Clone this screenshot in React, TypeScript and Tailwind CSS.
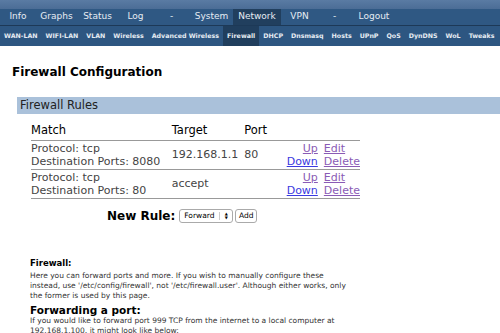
const mainMenu = [
  { label: "Info", w: "w-[36px]" },
  { label: "Graphs", w: "w-[41px]" },
  { label: "Status", w: "w-[41px]" },
  { label: "Log", w: "w-[35px]" },
  { label: "-", w: "w-[37px]" },
  { label: "System", w: "w-[43px]" },
  { label: "Network", w: "w-[48px]", active: true },
  { label: "VPN", w: "w-[37px]" },
  { label: "-", w: "w-[33px]" },
  { label: "Logout", w: "w-[46px]" },
];

const subMenu = [
  "WAN-LAN",
  "WIFI-LAN",
  "VLAN",
  "Wireless",
  "Advanced Wireless",
  "Firewall",
  "DHCP",
  "Dnsmasq",
  "Hosts",
  "UPnP",
  "QoS",
  "DynDNS",
  "WoL",
  "Tweaks",
];

const rules = [
  { port: "8080", target: "192.168.1.1", targetPort: "80" },
  { port: "80", target: "accept", targetPort: "" },
];

export default function App() {
  return (
    <div className="w-[500px] h-[333px] overflow-hidden bg-white font-['DejaVu_Sans',sans-serif] text-[#333]">
      {/* header */}
      <div className="h-[9px] bg-gradient-to-b from-[#5a7ba3] to-[#4b6d96]" />
      <div className="flex h-[16px] bg-[#2f5883] text-[9px] text-[#e6ecf3]">
        {mainMenu.map((m, i) => (
          <div
            key={i}
            className={`${m.w} flex items-center justify-center ${
              m.active ? "bg-[#213f5e]" : ""
            }`}
          >
            {m.label}
          </div>
        ))}
      </div>
      <div className="h-[1px] bg-[#1d3957]" />
      <div className="flex h-[20px] whitespace-nowrap bg-[#2d5681] text-[6.3px] font-bold text-[#e6ecf3]">
        {subMenu.map((s) => (
          <div
            key={s}
            className={`flex items-center px-[4px] ${
              s === "Firewall" ? "bg-[#203e5d]" : ""
            }`}
          >
            {s}
          </div>
        ))}
      </div>

      {/* content */}
      <h2 className="mt-[19px] ml-[12px] text-[12px] font-bold leading-[15px] text-black">
        Firewall Configuration
      </h2>

      <div className="mt-[17px] ml-[17px] flex h-[17px] items-center bg-[#aac1da] pl-[3px] text-[11.5px] text-[#222]">
        Firewall Rules
      </div>

      <table className="mt-[10px] ml-[31px] w-[329px] border-collapse text-[11px]">
        <thead>
          <tr className="border-b border-[#999] text-[11.5px] text-black">
            <th className="w-[147px] pb-[3px] text-left font-normal leading-[13px]">Match</th>
            <th className="w-[73px] pb-[3px] text-left font-normal leading-[13px]">Target</th>
            <th className="w-[44px] pb-[3px] text-left font-normal leading-[13px]">Port</th>
            <th className="pb-[3px]" />
            <th className="pb-[3px]" />
          </tr>
        </thead>
        <tbody>
          {rules.map((r, i) => (
            <tr key={i} className="border-b border-[#999]">
              <td className="py-[1px] align-middle text-[#444]">
                <div className="leading-[13px]">Protocol: tcp</div>
                <div className="leading-[13px]">Destination Ports: {r.port}</div>
              </td>
              <td className="align-middle text-[#444]">{r.target}</td>
              <td className="align-middle text-[#444]">{r.targetPort}</td>
              <td className="text-right align-middle">
                <div className="leading-[13px] text-[#8a5bb5] underline">Up</div>
                <div className="leading-[13px] text-[#3a3ae0] underline">Down</div>
              </td>
              <td className="pl-[6px] align-middle text-[#8a5bb5]">
                <div className="leading-[13px] underline">Edit</div>
                <div className="leading-[13px] underline">Delete</div>
              </td>
            </tr>
          ))}
        </tbody>
      </table>

      <div className="mt-[8px] ml-[107px] flex items-center gap-[4px]">
        <span className="text-[12px] font-bold text-black">New Rule:</span>
        <div className="flex items-center gap-[2px]">
          <div className="flex h-[14px] w-[54px] items-center rounded-[3px] border border-[#aaa] bg-white text-[7.5px] text-black">
            <span className="flex-1 pl-[4px]">Forward</span>
            <span className="flex w-[13px] flex-col items-center border-l border-[#ccc] text-[4px] leading-[4px]">
              <span>▲</span>
              <span>▼</span>
            </span>
          </div>
          <div className="flex h-[14px] w-[22px] items-center justify-center rounded-[3px] border border-[#aaa] bg-white text-[7.5px] text-black">
            Add
          </div>
        </div>
      </div>

      <div className="mt-[33px] ml-[30px] whitespace-nowrap text-[7.5px] leading-[10px] text-[#333]">
        <div className="mb-[2px] text-[8.5px] font-bold leading-[11px] text-black">Firewall:</div>
        <p>
          Here you can forward ports and more. If you wish to manually configure these
          <br />
          instead, use '/etc/config/firewall', not '/etc/firewall.user'. Although either works, only
          <br />
          the former is used by this page.
        </p>
        <div className="mt-[3px] text-[10.5px] font-bold leading-[12px] text-black">
          Forwarding a port:
        </div>
        <p>
          If you would like to forward port 999 TCP from the internet to a local computer at
          <br />
          192.168.1.100, it might look like below:
        </p>
      </div>
    </div>
  );
}
